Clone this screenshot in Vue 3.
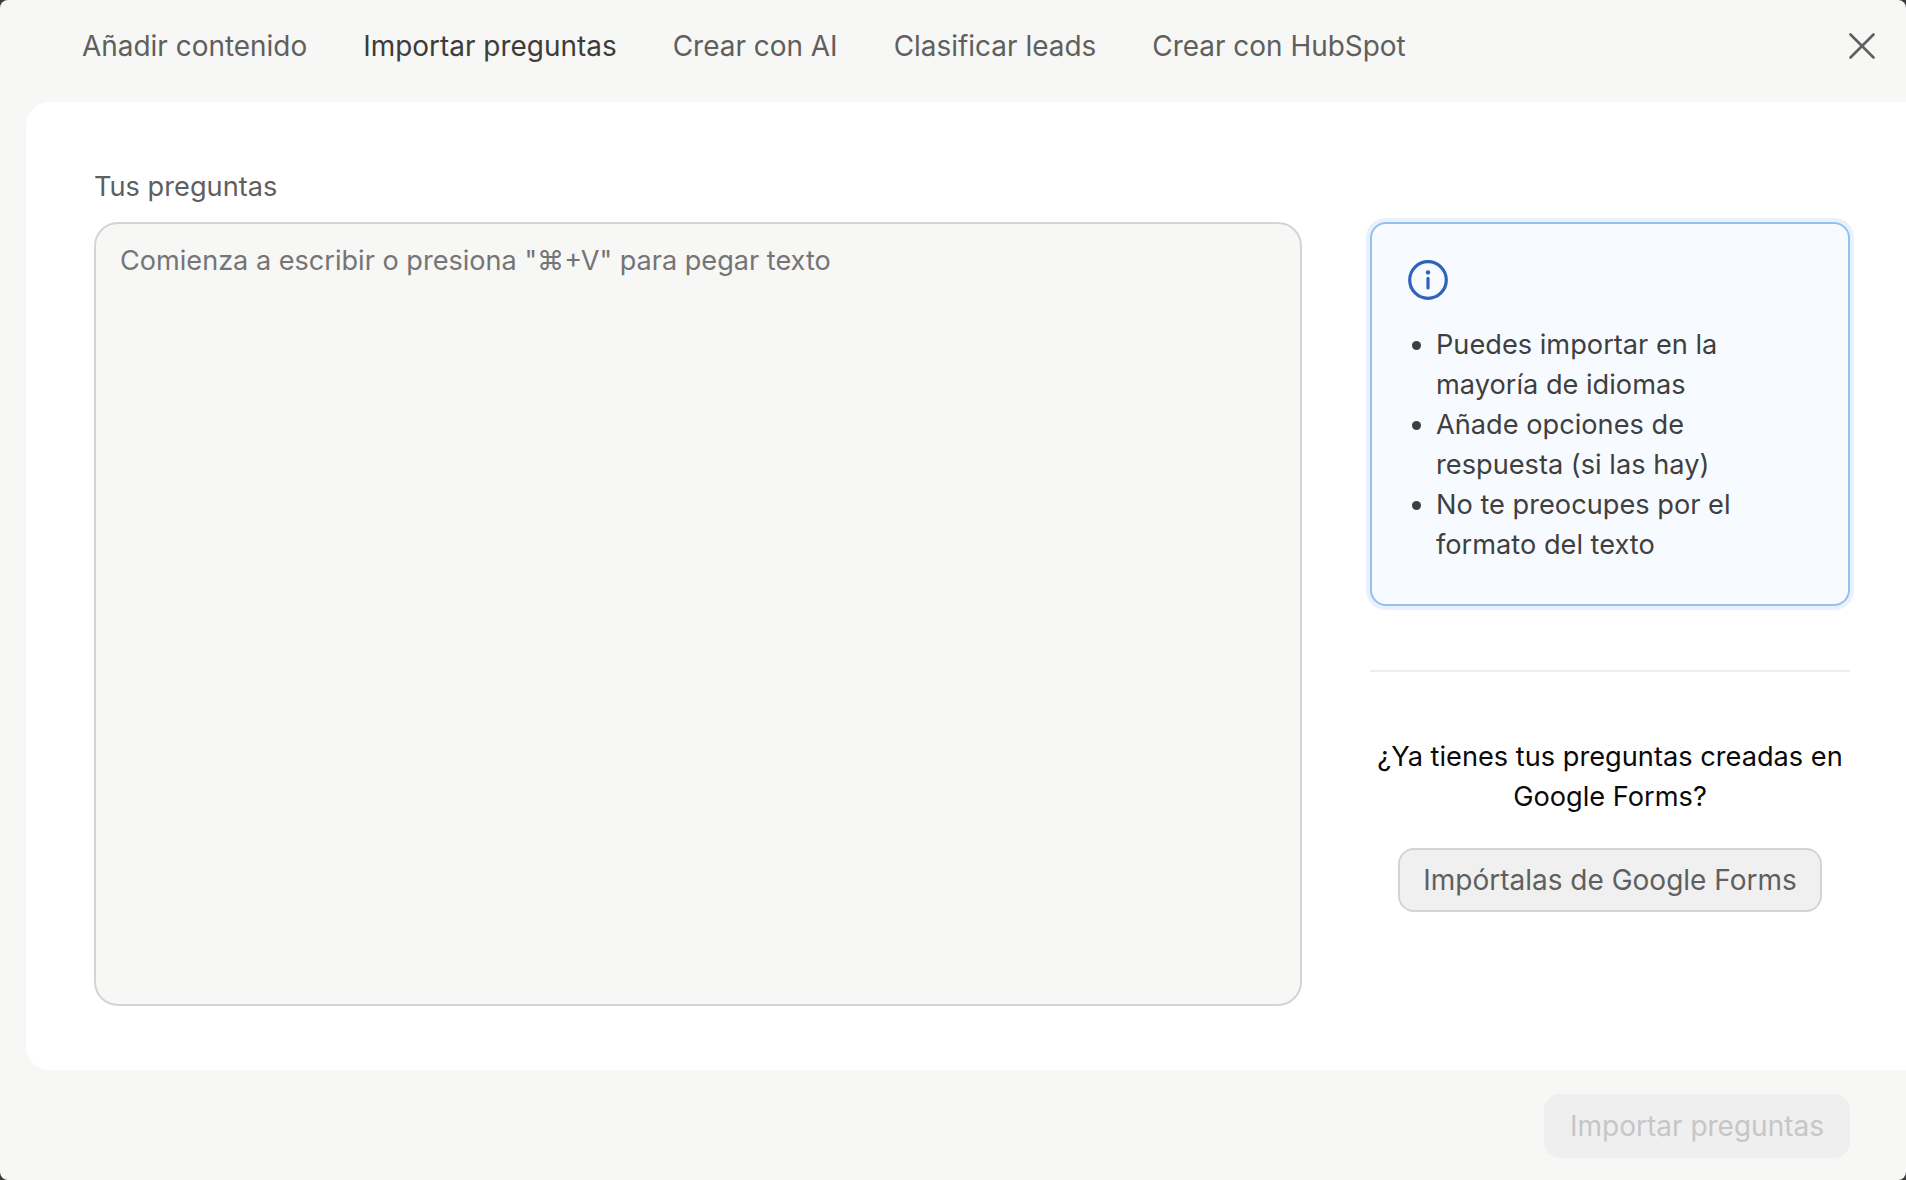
<script setup>
const tabs = [
  { label: 'Añadir contenido', active: false },
  { label: 'Importar preguntas', active: true },
  { label: 'Crear con AI', active: false },
  { label: 'Clasificar leads', active: false },
  { label: 'Crear con HubSpot', active: false }
]
const tips = [
  'Puedes importar en la mayoría de idiomas',
  'Añade opciones de respuesta (si las hay)',
  'No te preocupes por el formato del texto'
]
</script>

<template>
  <div class="modal">
    <header class="tabs">
      <nav class="tab-list">
        <span v-for="t in tabs" :key="t.label" class="tab" :class="{ active: t.active }">{{ t.label }}</span>
      </nav>
      <svg class="close" width="26" height="26" viewBox="0 0 26 26" fill="none">
        <path d="M1.5 1.5 24.5 24.5M24.5 1.5 1.5 24.5" stroke="#5f5f5f" stroke-width="2.6" stroke-linecap="round" />
      </svg>
    </header>
    <main class="panel">
      <section class="left">
        <label class="label">Tus preguntas</label>
        <div class="field">Comienza a escribir o presiona "⌘+V" para pegar texto</div>
      </section>
      <aside class="right">
        <div class="info">
          <svg class="info-icon" width="40" height="40" viewBox="0 0 40 40" fill="none">
            <circle cx="20" cy="20" r="18.3" stroke="#2f62bd" stroke-width="3.2" />
            <circle cx="20" cy="12.4" r="2.2" fill="#2f62bd" />
            <path d="M20 18.4V28" stroke="#2f62bd" stroke-width="3.2" stroke-linecap="round" />
          </svg>
          <ul class="tips">
            <li v-for="t in tips" :key="t">{{ t }}</li>
          </ul>
        </div>
        <hr class="divider" />
        <p class="question">¿Ya tienes tus preguntas creadas en Google Forms?</p>
        <button class="forms-btn">Impórtalas de Google Forms</button>
      </aside>
    </main>
    <footer class="footer">
      <button class="submit" disabled>Importar preguntas</button>
    </footer>
  </div>
</template>

<style>
html, body { margin: 0; background: #3a3a3a; }
</style>

<style scoped>
.modal {
  width: 1906px;
  height: 1180px;
  background: #f7f7f5;
  border-radius: 8px;
  overflow: hidden;
  display: flex;
  flex-direction: column;
  font-family: Inter, "Liberation Sans", sans-serif;
  font-size: 27.2px;
  line-height: 40px;
  box-sizing: border-box;
}
.tabs {
  height: 102px;
  flex: none;
  display: flex;
  align-items: center;
  justify-content: space-between;
  padding: 0 31px 10px 82px;
  box-sizing: border-box;
}
.tab-list { display: flex; gap: 56px; font-size: 27.95px; }
.tab { color: #5f5f5f; }
.tab.active { color: #3c3c3c; }
.panel {
  height: 968px;
  flex: none;
  margin-left: 26px;
  background: #fff;
  border-radius: 24px 0 0 24px;
  padding: 65px 56px 64px 68px;
  box-sizing: border-box;
  display: flex;
  gap: 68px;
}
.left { width: 1208px; flex: none; display: flex; flex-direction: column; }
.label { color: #5f5f5f; height: 40px; margin-bottom: 15px; }
.field {
  flex: 1;
  background: #f7f7f5;
  border: 2px solid #d4d4d4;
  border-radius: 24px;
  padding: 17px 24px;
  color: #757575;
  font-size: 27.1px;
}
.right { flex: 1; display: flex; flex-direction: column; align-items: center; padding-top: 55px; }
.info {
  align-self: stretch;
  height: 384px;
  box-sizing: border-box;
  background: #f7fbff;
  border: 2px solid #93c0ef;
  border-radius: 16px;
  box-shadow: 0 0 0 4px #e8f2fc;
  padding: 36px 36px 0;
  color: #3f3f3f;
}
.info-icon { display: block; }
.tips { margin: 25px 0 0; padding: 0 0 0 28px; }
.divider { align-self: stretch; margin: 64px 0 0; border: 0; height: 2px; background: #ededed; }
.question { margin: 65px 0 0; text-align: center; color: #0a0a0a; }
.forms-btn {
  margin-top: 31px;
  height: 64px;
  padding: 0 23.5px;
  font: inherit;
  font-size: 28px;
  color: #5f5f5f;
  background: #f0f0f0;
  border: 2px solid #d4d4d4;
  border-radius: 16px;
}
.footer { flex: 1; display: flex; justify-content: flex-end; align-items: flex-start; padding: 24px 56px 0 0; }
.submit {
  height: 64px;
  padding: 0 26px;
  font: inherit;
  font-size: 28px;
  color: #c6c6c6;
  background: #efefef;
  border: 0;
  border-radius: 16px;
}
</style>
